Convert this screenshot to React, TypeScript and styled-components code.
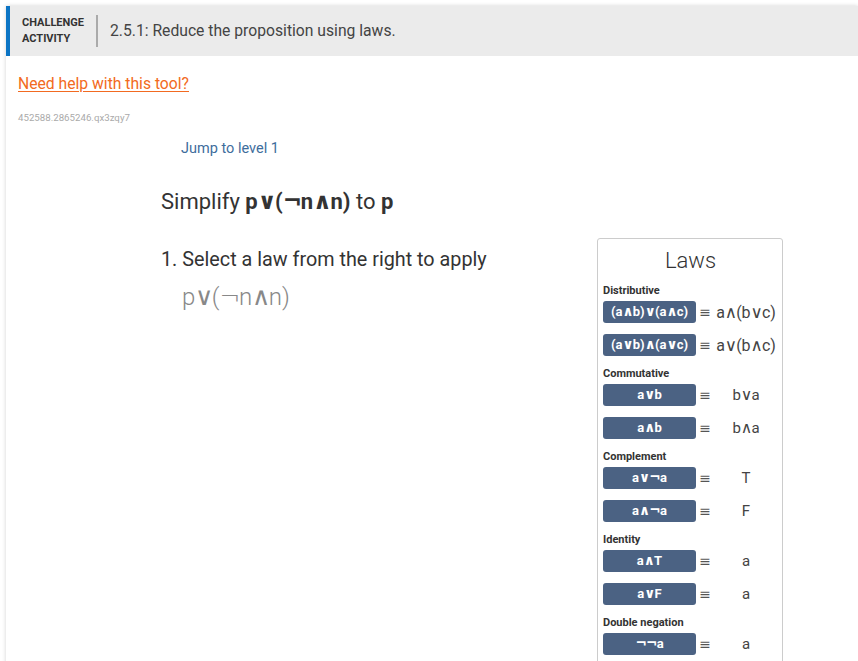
import { Fragment } from "react";
import styled, { createGlobalStyle } from "styled-components";

const GlobalStyle = createGlobalStyle`
  body {
    margin: 0;
    background: #fff;
    font-family: Roboto, "DejaVu Sans", sans-serif;
    color: #333;
  }
`;

const Page = styled.div`
  padding: 6px 0 0 6px;
  height: 661px;
  overflow: hidden;
  box-sizing: border-box;
`;

const Card = styled.div`
  background: #fff;
  box-shadow: 0 0 4px rgba(0, 0, 0, 0.18);
  min-height: 700px;
`;

const Header = styled.div`
  display: flex;
  align-items: center;
  height: 50px;
  background: #ebebeb;
  border-left: 4px solid #0b74c4;
`;

const Badge = styled.div`
  font-size: 11px;
  font-weight: 700;
  line-height: 16px;
  color: #333;
  padding: 0 12px 0 12px;
  border-right: 2px solid #aaa;
  margin-right: 12px;
`;

const HeaderTitle = styled.div`
  font-size: 15.7px;
  color: #444;
  margin-top: -1px;
`;

const Body = styled.div`
  padding: 18px 12px 0 12px;
`;

const HelpLink = styled.a`
  font-size: 15.7px;
  color: #f26a21;
  text-decoration: underline;
  text-underline-offset: 2px;
  line-height: 20px;
  display: inline-block;
`;

const ActivityId = styled.div`
  font-size: 9.7px;
  color: #aaa;
  margin-top: 18px;
`;

const Tool = styled.div`
  display: flex;
  padding-left: 143px;
  margin-top: 15px;
`;

const Main = styled.div`
  width: 436px;
`;

const JumpLink = styled.a`
  display: block;
  font-size: 14.5px;
  color: #3e6d9c;
  margin-left: 20px;
  line-height: 20px;
  margin-top: 1px;
`;

const Prompt = styled.div`
  font-size: 22px;
  color: #333;
  margin-top: 30px;
  line-height: 26px;

  b {
    font-weight: 700;
  }
`;

const Step = styled.div`
  font-size: 19.8px;
  color: #333;
  margin-top: 33px;
  line-height: 24px;
`;

const Expression = styled.div`
  font-size: 24px;
  font-weight: 300;
  color: #888;
  margin: 11px 0 0 21px;
  line-height: 28px;
`;

// logic operators come from DejaVu, closer in size to the original
const Op = styled.span`
  font-family: "DejaVu Sans", sans-serif;
  font-size: 1.05em;
  line-height: 1;
  letter-spacing: -0.06em;
`;

const LawsPanel = styled.div`
  width: 186px;
  margin-top: 100px;
  border: 1px solid #ccc;
  border-radius: 3px;
  padding: 0 4px 0 5px;
  box-sizing: border-box;
  height: 440px;
`;

const LawsTitle = styled.div`
  text-align: center;
  font-size: 22px;
  font-weight: 300;
  color: #333;
  margin-top: 10px;
  line-height: 24px;
`;

const Group = styled.div`
  display: flex;
  flex-direction: column;
  padding-top: 11px;
`;

const Section = styled.div`
  font-size: 11px;
  font-weight: 700;
  color: #333;
  margin-bottom: 4px;
  line-height: 13px;
`;

const LawRow = styled.div`
  display: grid;
  grid-template-columns: 93px 18px 1fr;
  align-items: center;
  height: 22px;
  & + & {
    margin-top: 11px;
  }
`;

const LawButton = styled.button`
  height: 22px;
  padding: 0;
  border: none;
  border-radius: 3px;
  background: #4b6283;
  color: #fff;
  font-family: Roboto, "DejaVu Sans", sans-serif;
  font-size: 13px;
  font-weight: 700;
  line-height: 22px;
  cursor: pointer;
`;

const Equiv = styled.span`
  text-align: center;
  font-size: 14px;
  color: #555;
`;

const Result = styled.span<{ $wide?: boolean }>`
  text-align: center;
  font-size: ${(p) => (p.$wide ? "16px" : "15px")};
  color: #444;
`;

const expr = (s: string) =>
  s.split(/([∧∨¬])/).map((part, i) =>
    /[∧∨¬]/.test(part) ? <Op key={i}>{part}</Op> : <Fragment key={i}>{part}</Fragment>
  );

type Law = { from: string; to: string };

const sections: { name: string; wide?: boolean; laws: Law[] }[] = [
  {
    name: "Distributive",
    wide: true,
    laws: [
      { from: "(a∧b)∨(a∧c)", to: "a∧(b∨c)" },
      { from: "(a∨b)∧(a∨c)", to: "a∨(b∧c)" },
    ],
  },
  {
    name: "Commutative",
    laws: [
      { from: "a∨b", to: "b∨a" },
      { from: "a∧b", to: "b∧a" },
    ],
  },
  {
    name: "Complement",
    laws: [
      { from: "a∨¬a", to: "T" },
      { from: "a∧¬a", to: "F" },
    ],
  },
  {
    name: "Identity",
    laws: [
      { from: "a∧T", to: "a" },
      { from: "a∨F", to: "a" },
    ],
  },
  {
    name: "Double negation",
    laws: [{ from: "¬¬a", to: "a" }],
  },
];

const App = () => {
  return (
    <Page>
      <GlobalStyle />
      <Card>
        <Header>
          <Badge>
            CHALLENGE
            <br />
            ACTIVITY
          </Badge>
          <HeaderTitle>2.5.1: Reduce the proposition using laws.</HeaderTitle>
        </Header>
        <Body>
          <HelpLink href="#">Need help with this tool?</HelpLink>
          <ActivityId>452588.2865246.qx3zqy7</ActivityId>
          <Tool>
            <Main>
              <JumpLink>Jump to level 1</JumpLink>
              <Prompt>
                Simplify <b>{expr("p∨(¬n∧n)")}</b> to <b>p</b>
              </Prompt>
              <Step>1. Select a law from the right to apply</Step>
              <Expression>{expr("p∨(¬n∧n)")}</Expression>
            </Main>
            <LawsPanel>
              <LawsTitle>Laws</LawsTitle>
              {sections.map((s) => (
                <Group key={s.name}>
                  <Section>{s.name}</Section>
                  {s.laws.map((l) => (
                    <LawRow key={l.from}>
                      <LawButton>{expr(l.from)}</LawButton>
                      <Equiv>≡</Equiv>
                      <Result $wide={s.wide}>{expr(l.to)}</Result>
                    </LawRow>
                  ))}
                </Group>
              ))}
            </LawsPanel>
          </Tool>
        </Body>
      </Card>
    </Page>
  );
};

export default App;
